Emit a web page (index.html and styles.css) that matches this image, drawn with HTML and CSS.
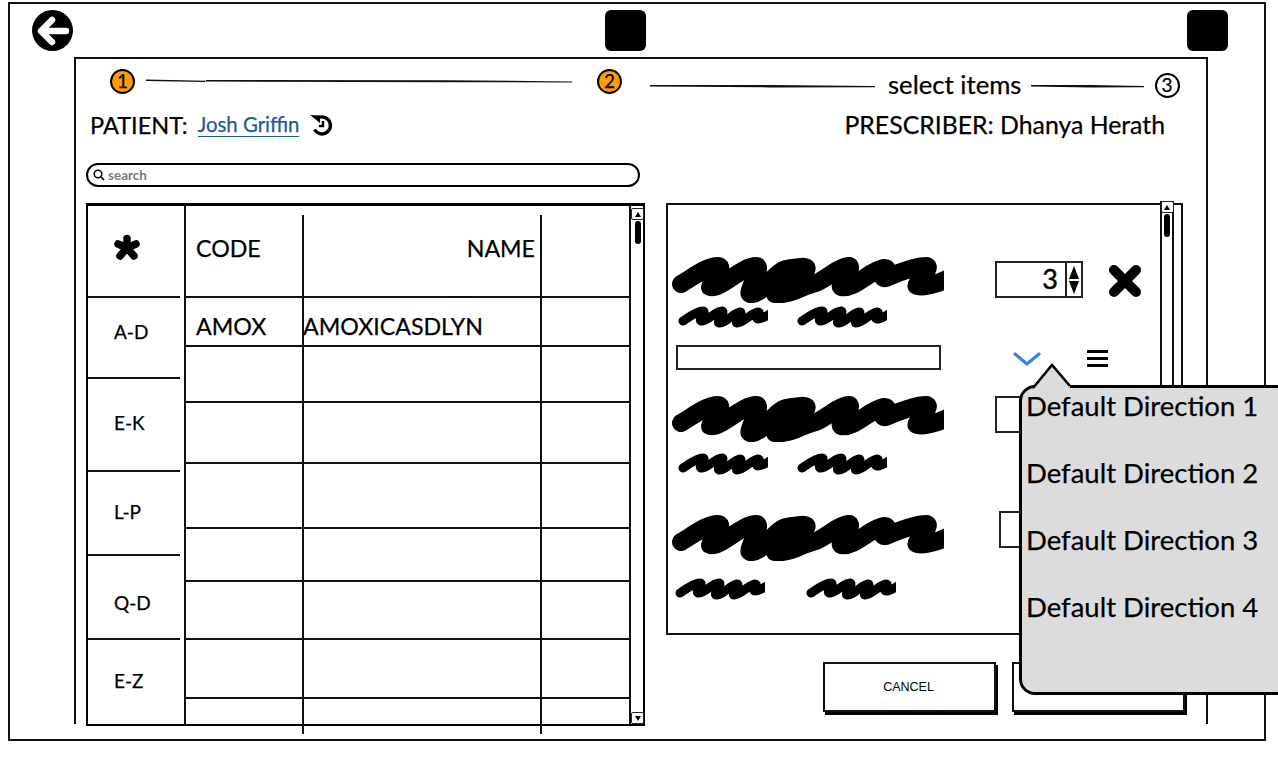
FILE: index.html
```html
<!DOCTYPE html>
<html lang="en">
<head>
<meta charset="utf-8">
<title>Select items</title>
<link rel="stylesheet" href="styles.css">
</head>
<body>
<svg class="defs" width="0" height="0" aria-hidden="true">
  <symbol id="scrib-big" viewBox="0 0 272 47">
    <path d="M9 28C20 22 34 10 46 10C54 10 38 28 38 31C48 34 70 10 84 10C92 10 74 36 78 38C90 40 102 16 114 13C124 11 138 9 134 14C128 22 110 36 103 38C118 40 130 30 144 27C156 22 166 11 176 10C184 9 166 28 169 31C182 34 198 14 212 12C220 11 206 24 214 22C228 16 244 10 254 10C262 10 242 28 245 30C256 32 270 26 285 18" fill="none" stroke="#000" stroke-width="18" stroke-linecap="round" stroke-linejoin="round"/>
  </symbol>
  <symbol id="scrib-small" viewBox="0 0 90 23">
    <path d="M5 16C11 12 19 6 25 6C29 6 20 14 23 16C29 17 37 6 44 6C48 6 38 17 41 18C47 19 55 8 62 7C66 7 56 17 59 18C66 18 73 8 80 7C84 7 76 14 80 14C85 14 90 10 96 6" fill="none" stroke="#000" stroke-width="9" stroke-linecap="round" stroke-linejoin="round"/>
  </symbol>
</svg>
<main class="outer">
  <header class="topbar">
    <svg class="back" viewBox="0 0 41 41" aria-label="Back">
      <circle cx="20.5" cy="20.5" r="20.5" fill="#000"/>
      <path d="M34 21H10M20 10L9 21L20 32" fill="none" stroke="#fff" stroke-width="6.5" stroke-linecap="round" stroke-linejoin="round"/>
    </svg>
    <div class="blackbox first"></div>
    <div class="blackbox second"></div>
  </header>
  <section class="inner">
    <div class="steps">
      <span class="dot active">1</span>
      <svg class="line l1" viewBox="0 0 426 4" preserveAspectRatio="none"><path d="M0 .5L60 1.800L59 3L0 2ZM60 1L300 1.200L426 2.500V3.400L300 3.200L60 2.600Z"/></svg>
      <span class="dot active d2">2</span>
      <svg class="line l2 low" viewBox="0 0 225 4" preserveAspectRatio="none"><path d="M0 1L120 1L225 2V3.200L120 3.400L0 2.400Z"/></svg>
      <span class="step-title low">select items</span>
      <svg class="line l3 low" viewBox="0 0 113 4" preserveAspectRatio="none"><path d="M0 1L60 1L113 2V3.200L60 3.400L0 2.400Z"/></svg>
      <span class="dot d3 low">3</span>
    </div>
    <div class="info">
      <div class="patient">
        <span>PATIENT:</span>
        <a class="link">Josh Griffin</a>
        <svg class="history" viewBox="0 0 24 24" aria-label="History">
          <path d="M7 5.500A8.500 8.500 0 1 1 4.500 16.500" fill="none" stroke="#000" stroke-width="3.400"/>
          <path d="M0 2L10 2.500V10Z" fill="#000"/>
          <path d="M13 8V13H9" fill="none" stroke="#000" stroke-width="2.400"/>
        </svg>
      </div>
      <div class="prescriber">PRESCRIBER: Dhanya Herath</div>
    </div>
    <div class="search">
      <svg class="search-icon" viewBox="0 0 12 12"><circle cx="5" cy="5" r="3.800" fill="none" stroke="#000" stroke-width="1.500"/><path d="M8 8L11 11" stroke="#000" stroke-width="1.700"/></svg>
      <span>search</span>
    </div>
    <div class="content">
      <div class="table">
        <div class="alpha">
          <div class="alpha-cell">
            <svg class="star" viewBox="0 0 28 28" aria-label="All"><path d="M14 14V4.500M14 14L5 10M14 14L23 10M14 14L7 22M14 14L21 22" stroke="#000" stroke-width="7.500" stroke-linecap="round"/></svg>
          </div>
          <div class="alpha-cell">A-D</div>
          <div class="alpha-cell">E-K</div>
          <div class="alpha-cell">L-P</div>
          <div class="alpha-cell">Q-D</div>
          <div class="alpha-cell">E-Z</div>
        </div>
        <div class="rows">
          <div class="row r-head"><span class="code">CODE</span><span class="name right">NAME</span></div>
          <div class="row r-first"><span class="code">AMOX</span><span class="name">AMOXICASDLYN</span></div>
          <div class="row"></div>
          <div class="row"></div>
          <div class="row"></div>
          <div class="row"></div>
          <div class="row"></div>
          <div class="row"></div>
          <div class="row last"></div>
        </div>
        <div class="scrollbar table-bar">
          <div class="sb-btn"><i class="tri-up"></i></div>
          <div class="sb-thumb"></div>
          <div class="sb-btn bottom"><i class="tri-down"></i></div>
        </div>
        <i class="vline v1"></i>
        <i class="vline v2"></i>
        <i class="vline v3"></i>
      </div>
      <div class="right-col">
        <div class="panel">
          <div class="scrollbar panel-bar">
            <div class="sb-btn"><i class="tri-up"></i></div>
            <div class="sb-thumb"></div>
          </div>
          <div class="item i1">
            <div class="scribbles">
              <svg class="big"><use href="#scrib-big"/></svg>
              <div class="small-row"><svg class="small"><use href="#scrib-small"/></svg><svg class="small"><use href="#scrib-small"/></svg></div>
            </div>
            <div class="controls">
              <div class="qty"><span class="qty-val">3</span><span class="spin"><i class="spin-up"></i><i class="spin-down"></i></span></div>
              <svg class="remove" viewBox="0 0 34 34" aria-label="Remove"><path d="M6 6L28 28M28 6L6 28" stroke="#000" stroke-width="10" stroke-linecap="round"/></svg>
            </div>
            <div class="note"></div>
            <div class="actions">
              <svg class="chevron" viewBox="0 0 28 14" aria-label="Expand"><path d="M2 2L14 12L26 2" fill="none" stroke="#3b7fe6" stroke-width="3.200" stroke-linecap="round" stroke-linejoin="round"/></svg>
              <svg class="burger" viewBox="0 0 21 17" aria-label="Menu"><path d="M0 1.500H21M0 8.500H21M0 15.500H21" stroke="#000" stroke-width="3"/></svg>
            </div>
          </div>
          <div class="item i2">
            <div class="scribbles">
              <svg class="big"><use href="#scrib-big"/></svg>
              <div class="small-row"><svg class="small"><use href="#scrib-small"/></svg><svg class="small"><use href="#scrib-small"/></svg></div>
            </div>
            <div class="controls"><div class="qty"></div></div>
          </div>
          <div class="item i3">
            <div class="scribbles">
              <svg class="big"><use href="#scrib-big"/></svg>
              <div class="small-row"><svg class="small"><use href="#scrib-small"/></svg><svg class="small"><use href="#scrib-small"/></svg></div>
            </div>
            <div class="controls"><div class="qty"></div></div>
          </div>
        </div>
        <div class="buttons">
          <div class="btn">CANCEL</div>
          <div class="btn"></div>
        </div>
        <div class="popup">
          <svg class="popup-arrow" viewBox="0 0 40 28"><path d="M2 23L19 2L37 23V28H2Z" fill="#dcdcdc"/><path d="M0 25L19 2L37 23" fill="none" stroke="#000" stroke-width="2.600"/></svg>
          <div>Default Direction 1</div>
          <div>Default Direction 2</div>
          <div>Default Direction 3</div>
          <div>Default Direction 4</div>
        </div>
      </div>
    </div>
  </section>
</main>
</body>
</html>
```
FILE: styles.css
```css
* { box-sizing: border-box; }
html, body { margin: 0; padding: 0; }
body {
  width: 1278px;
  height: 769px;
  overflow: hidden;
  background: #fff;
  color: #000;
  font-family: "Lato", "Open Sans", sans-serif;
  -webkit-text-stroke: 0.25px #000;
}
i { display: block; }
.defs { position: absolute; }

.outer {
  width: 1258px;
  height: 739px;
  margin: 2px 0 0 8px;
  border: 2px solid #111;
}
.topbar {
  display: flex;
  height: 47px;
  padding: 6px 0 0 22px;
}
.back { width: 41px; height: 41px; }
.blackbox { width: 41px; height: 41px; background: #000; border-radius: 6px; }
.blackbox.first { margin-left: 532px; }
.blackbox.second { margin-left: 541px; }

.inner {
  width: 1134px;
  height: 667px;
  margin: 6px 0 0 64px;
  border: solid #111;
  border-width: 2px 2px 0 2px;
}
.steps {
  display: flex;
  align-items: center;
  height: 44px;
  padding-left: 34px;
}
.dot {
  width: 25px;
  height: 25px;
  flex: none;
  border: 2px solid #000;
  border-radius: 50%;
  background: #fff;
  font-size: 19px;
  line-height: 20px;
  text-align: center;
}
.dot.active { background: #ff9a00; }
.dot.d2 { margin-left: 25px; }
.dot.d3 { margin-left: 11px; }
.low { margin-top: 9px; }
.line { display: block; height: 4px; flex: none; fill: #111; }
.l1 { width: 426px; margin-left: 11px; }
.l2 { width: 225px; margin-left: 28px; }
.l3 { width: 113px; margin-left: 9px; }
.step-title { margin-left: 13px; margin-top: 5px; font-size: 25.700px; line-height: 28px; white-space: nowrap; }

.info {
  display: flex;
  justify-content: space-between;
  align-items: center;
  height: 25px;
  margin-top: 9px;
  padding: 0 41px 0 14px;
  font-size: 23.500px;
}
.prescriber { font-size: 24.800px; }
.patient { display: flex; align-items: center; }
.link {
  margin-left: 10px;
  color: #1c5a99;
  -webkit-text-stroke: 0.25px #1c5a99;
  font-size: 20.400px;
  line-height: 23px;
  border-bottom: 1px solid #1c5a99;
}
.history { width: 24px; height: 24px; margin-left: 11px; }

.search {
  display: flex;
  align-items: center;
  width: 554px;
  height: 24px;
  margin: 26px 0 0 10px;
  padding-left: 5px;
  border: 2px solid #000;
  border-radius: 12px;
  color: #7b7b80;
  -webkit-text-stroke: 0;
  font-size: 13.500px;
  font-weight: 700;
}
.search-icon { width: 12px; height: 12px; margin-right: 3px; }

.content { display: flex; margin-top: 16px; padding-left: 10px; }

.table {
  position: relative;
  display: flex;
  width: 559px;
  height: 523px;
  border: 2px solid #000;
  border-width: 3px 2px 2px 2px;
}
.alpha {
  display: grid;
  grid-template-rows: 92px 81px 93px 84px 84px 1fr;
  width: 96px;
  flex: none;
}
.alpha-cell {
  display: flex;
  align-items: center;
  margin-right: 4px;
  padding-left: 26px;
  border-bottom: 2px solid #111;
  font-size: 19px;
}
.alpha-cell:nth-child(1) { padding: 0 0 6px 25px; }
.alpha-cell:nth-child(2) { align-items: flex-start; padding-top: 22px; }
.alpha-cell:nth-child(3) { padding-bottom: 4px; }
.alpha-cell:nth-child(4) { padding-bottom: 4px; }
.alpha-cell:nth-child(5) { padding-top: 10px; }
.alpha-cell:nth-child(6) { border-bottom: 0; padding-bottom: 3px; }
.star { width: 28px; height: 28px; }

.rows {
  display: grid;
  grid-template-rows: 92px 49px 56px 61px 65px 53px 58px 59px 1fr;
  width: 445px;
  flex: none;
}
.row {
  display: grid;
  grid-template-columns: 119px 238px;
  align-items: center;
  border-bottom: 2px solid #111;
  font-size: 23.200px;
}
.row.last { border-bottom: 0; }
.r-head { padding-bottom: 6px; }
.r-first { padding-top: 9px; }
.code { padding-left: 12px; }
.name.right { text-align: right; padding-right: 6px; }

.vline { position: absolute; width: 2px; background: #111; }
.v1 { left: 96px; top: 0; bottom: 0; }
.v2 { left: 214px; top: 9px; bottom: -10px; }
.v3 { left: 452px; top: 9px; bottom: -10px; }

.scrollbar {
  display: flex;
  flex-direction: column;
  align-items: center;
  width: 15px;
  flex: none;
  border-left: 2px solid #111;
}
.table-bar { height: 100%; padding-top: 2px; }
.sb-btn {
  display: flex;
  align-items: center;
  justify-content: center;
  width: 13px;
  height: 12px;
  flex: none;
  border: 1.500px solid #222;
  border-radius: 2px;
  background: #fff;
}
.sb-btn.bottom { margin-top: auto; }
.sb-thumb { width: 6px; height: 23px; margin-top: 1px; background: #000; border-radius: 3px; }
.tri-up { border: solid transparent; border-width: 0 3.500px 5px; border-bottom-color: #000; }
.tri-down { border: solid transparent; border-width: 5px 3.500px 0; border-top-color: #000; }

.right-col { position: relative; margin-left: 21px; }
.panel {
  position: relative;
  width: 517px;
  height: 432px;
  border: 2px solid #111;
}
.panel-bar {
  position: absolute;
  top: -4px;
  right: 7px;
  height: 435px;
  width: 14px;
  border-right: 2px solid #111;
}
.item {
  display: grid;
  grid-template-columns: 323px auto;
  justify-content: start;
  padding-left: 4px;
}
.i1 { margin-top: 51px; }
.i2 { margin-top: 25px; }
.i3 { margin-top: 36px; }
.big { display: block; width: 272px; height: 47px; }
.small { display: block; width: 90px; height: 23px; }
.small-row { display: flex; gap: 29px; margin-top: 2px; padding-left: 6px; }
.i2 .small-row { margin-top: 10px; height: 26px; }
.i3 .small-row { margin-top: 16px; gap: 41px; padding-left: 3px; height: 26px; }
.controls { display: flex; align-items: flex-start; padding-top: 5px; }
.i2 .controls { padding-top: 1px; }
.i3 .controls { padding: 0 0 0 4px; margin-top: -3px; }
.qty {
  display: flex;
  justify-content: flex-end;
  width: 88px;
  height: 37px;
  border: 2px solid #222;
}
.qty-val { flex: 1; padding-right: 7px; text-align: right; font-size: 27px; line-height: 31px; -webkit-text-stroke: 0.5px #000; }
.spin {
  display: flex;
  flex-direction: column;
  align-items: center;
  justify-content: center;
  gap: 2px;
  width: 16px;
  border-left: 2px solid #222;
}
.spin-up { border: solid transparent; border-width: 0 5.500px 13px; border-bottom-color: #000; }
.spin-down { border: solid transparent; border-width: 13px 5.500px 0; border-top-color: #000; }
.remove { width: 34px; height: 34px; margin: 3px 0 0 25px; }
.note {
  width: 265px;
  height: 25px;
  margin: 17px 0 0 4px;
  border: 2px solid #222;
}
.actions { display: flex; align-items: flex-start; padding: 24px 0 0 18px; }
.chevron { width: 28px; height: 14px; }
.burger { width: 21px; height: 17px; margin: -2px 0 0 46px; }

.buttons { display: flex; gap: 16px; margin: 27px 0 0 157px; }
.btn {
  display: flex;
  align-items: center;
  justify-content: center;
  padding-right: 2px;
  width: 173px;
  height: 50px;
  border: 2px solid #111;
  box-shadow: 2px 3px 0 #000;
  font-family: "Liberation Sans", sans-serif;
  font-size: 12.500px;
  -webkit-text-stroke: 0;
}

.popup {
  position: absolute;
  left: 353px;
  top: 182px;
  display: flex;
  flex-direction: column;
  gap: 37px;
  width: 290px;
  height: 310px;
  padding: 3px 0 0 4px;
  background: #dcdcdc;
  border: 3px solid #000;
  border-radius: 16px;
  font-size: 27.500px;
  line-height: 30px;
  white-space: nowrap;
}
.popup-arrow {
  position: absolute;
  left: 11px;
  top: -25px;
  width: 40px;
  height: 28px;
}
```
